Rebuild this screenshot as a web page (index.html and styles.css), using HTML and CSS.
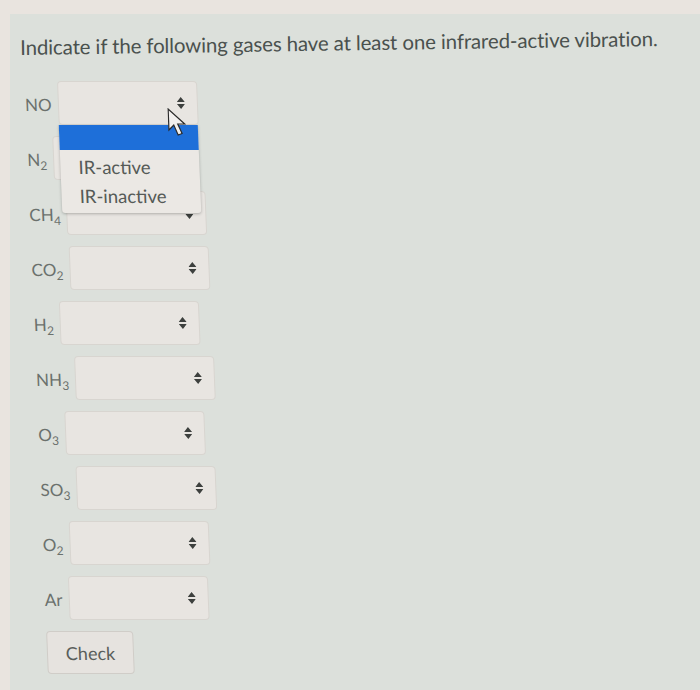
FILE: index.html
```html
<!DOCTYPE html>
<html lang="en">
<head>
<meta charset="utf-8">
<title>Infrared-active vibrations</title>
<link rel="stylesheet" href="styles.css">
</head>
<body>
<main class="panel">
  <h1 class="question">Indicate if the following gases have at least one infrared-active vibration.</h1>
  <div class="rows">
    <div class="row">
      <span class="label">NO</span>
      <div class="select">
        <svg class="arrows" viewBox="0 0 8 12"><path d="M4 0 L8 5 H0 Z M0 7 H8 L4 12 Z"/></svg>
      </div>
      <div class="dropdown">
        <div class="opt opt-blank"></div>
        <div class="opt">IR-active</div>
        <div class="opt">IR-inactive</div>
      </div>
      <svg class="cursor" viewBox="0 0 20 30"><path d="M1 1 L1 22 L6 17 L10 27 L14 25.5 L10 16 L17 16 Z"/></svg>
    </div>
    <div class="row">
      <span class="label">N<sub>2</sub></span>
      <div class="select">
        <svg class="arrows" viewBox="0 0 8 12"><path d="M4 0 L8 5 H0 Z M0 7 H8 L4 12 Z"/></svg>
      </div>
    </div>
    <div class="row">
      <span class="label">CH<sub>4</sub></span>
      <div class="select">
        <svg class="arrows" viewBox="0 0 8 12"><path d="M4 0 L8 5 H0 Z M0 7 H8 L4 12 Z"/></svg>
      </div>
    </div>
    <div class="row">
      <span class="label">CO<sub>2</sub></span>
      <div class="select">
        <svg class="arrows" viewBox="0 0 8 12"><path d="M4 0 L8 5 H0 Z M0 7 H8 L4 12 Z"/></svg>
      </div>
    </div>
    <div class="row">
      <span class="label">H<sub>2</sub></span>
      <div class="select">
        <svg class="arrows" viewBox="0 0 8 12"><path d="M4 0 L8 5 H0 Z M0 7 H8 L4 12 Z"/></svg>
      </div>
    </div>
    <div class="row">
      <span class="label">NH<sub>3</sub></span>
      <div class="select">
        <svg class="arrows" viewBox="0 0 8 12"><path d="M4 0 L8 5 H0 Z M0 7 H8 L4 12 Z"/></svg>
      </div>
    </div>
    <div class="row">
      <span class="label">O<sub>3</sub></span>
      <div class="select">
        <svg class="arrows" viewBox="0 0 8 12"><path d="M4 0 L8 5 H0 Z M0 7 H8 L4 12 Z"/></svg>
      </div>
    </div>
    <div class="row">
      <span class="label">SO<sub>3</sub></span>
      <div class="select">
        <svg class="arrows" viewBox="0 0 8 12"><path d="M4 0 L8 5 H0 Z M0 7 H8 L4 12 Z"/></svg>
      </div>
    </div>
    <div class="row">
      <span class="label">O<sub>2</sub></span>
      <div class="select">
        <svg class="arrows" viewBox="0 0 8 12"><path d="M4 0 L8 5 H0 Z M0 7 H8 L4 12 Z"/></svg>
      </div>
    </div>
    <div class="row">
      <span class="label">Ar</span>
      <div class="select">
        <svg class="arrows" viewBox="0 0 8 12"><path d="M4 0 L8 5 H0 Z M0 7 H8 L4 12 Z"/></svg>
      </div>
    </div>
    <div class="actions">
      <button class="check" type="button">Check</button>
    </div>
  </div>
</main>
</body>
</html>
```

FILE: styles.css
```css
html, body {
  margin: 0;
  padding: 0;
  height: 100%;
}

body {
  background: #e9e4df;
  font-family: Lato, "Open Sans", sans-serif;
  overflow: hidden;
}

.panel {
  margin: 14px 0 0 10px;
  height: calc(100% - 14px);
  background: #dce0db;
  padding: 21px 0 0 10px;
  box-sizing: border-box;
}

.question {
  margin: 0;
  font-size: 20.4px;
  font-weight: 400;
  color: #4a514e;
  letter-spacing: -0.1px;
  transform: rotate(-0.8deg);
  transform-origin: left top;
}

.rows {
  margin-top: 22px;
  display: flex;
  flex-direction: column;
  gap: 11px;
  transform: skewX(2.3deg);
  transform-origin: left top;
}

.row {
  position: relative;
  display: flex;
  align-items: center;
  gap: 6px;
  padding-left: 4px;
}

.label {
  font-size: 17px;
  color: #6b716d;
  padding-top: 2px;
}

.label sub {
  font-size: 12px;
  vertical-align: -4px;
  line-height: 0;
}

.select {
  width: 140px;
  height: 44px;
  box-sizing: border-box;
  background: #e8e5e1;
  border: 1px solid #d8d5d0;
  border-radius: 4px;
  display: flex;
  align-items: center;
  justify-content: flex-end;
  padding-right: 12px;
}

.arrows {
  width: 8px;
  height: 12px;
  fill: #3d403e;
}

.dropdown {
  position: absolute;
  left: 37px;
  top: 44px;
  width: 139px;
  background: #ebe8e4;
  box-shadow: 0 1px 3px rgba(0, 0, 0, 0.25);
  border-radius: 0 0 3px 3px;
  z-index: 2;
  padding-bottom: 2px;
}

.opt {
  font-size: 18.5px;
  color: #555a57;
  padding-left: 18px;
  height: 29px;
  line-height: 29px;
}

.opt-blank {
  height: 25px;
  background: #1e6fd9;
  margin-bottom: 3px;
}

.cursor {
  position: absolute;
  left: 146px;
  top: 27px;
  width: 20px;
  height: 30px;
  fill: #f2f0ee;
  stroke: #2b2b2b;
  stroke-width: 1.2;
  z-index: 3;
}

.actions {
  padding-left: 4px;
}

.check {
  width: 87px;
  height: 43px;
  background: #e6e3df;
  border: 1px solid #d0cdc8;
  border-radius: 4px;
  font-family: Lato, "Open Sans", sans-serif;
  font-size: 18px;
  color: #5a5e5b;
  padding: 0;
}
```
